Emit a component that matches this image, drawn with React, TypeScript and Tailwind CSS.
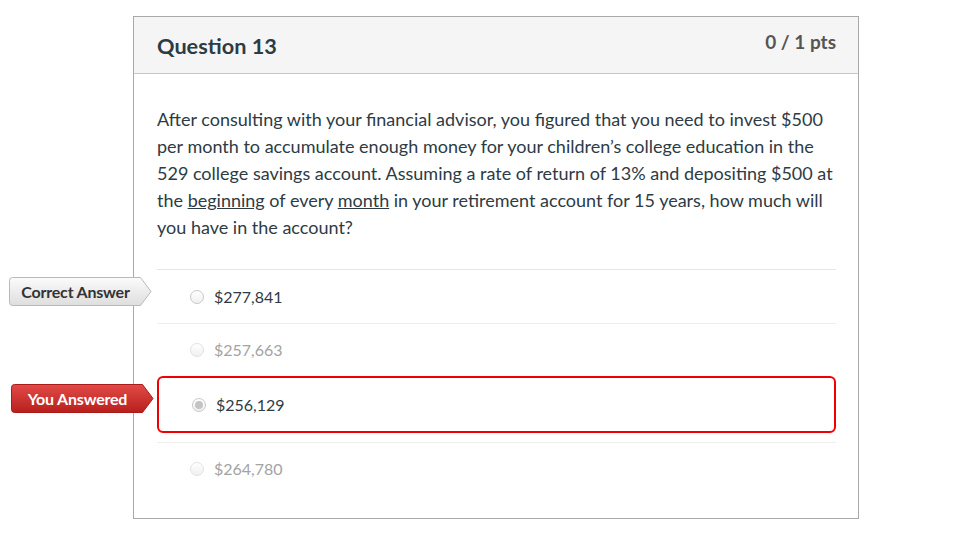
import React from "react"

function Radio({ checked, dim }: { checked?: boolean; dim?: boolean }) {
  return (
    <span
      className={`inline-flex items-center justify-center w-[14px] h-[14px] rounded-full border bg-gradient-to-b from-white to-[#f0f0f0] ${dim ? "border-[#e2e2e2]" : "border-[#c8c8c8]"}`}
    >
      {checked && <span className="w-[8px] h-[8px] rounded-full bg-[#c4c4c4]" />}
    </span>
  )
}

function Tag({ text, red }: { text: string; red?: boolean }) {
  return (
    <div className="relative w-[143px] h-[29px] flex items-center">
      <svg className="absolute inset-0" width="143" height="29" viewBox="0 0 143 29">
        <defs>
          <linearGradient id={red ? "gr" : "gg"} x1="0" y1="0" x2="0" y2="1">
            <stop offset="0" stopColor={red ? "#e14a46" : "#fbfbfb"} />
            <stop offset="1" stopColor={red ? "#b8201d" : "#dedede"} />
          </linearGradient>
        </defs>
        <path
          d="M3.5 0.5 H131.5 L142 14.5 L131.5 28.5 H3.5 Q0.5 28.5 0.5 25.5 V3.5 Q0.5 0.5 3.5 0.5 Z"
          fill={`url(#${red ? "gr" : "gg"})`}
          stroke={red ? "#a91b18" : "#b9b9b9"}
        />
      </svg>
      <span
        className={`relative w-[133px] text-center text-[16px] font-bold tracking-[-0.2px] ${red ? "text-white" : "text-[#333]"}`}
      >
        {text}
      </span>
    </div>
  )
}

export default function App() {
  return (
    <div className="w-[957px] h-[544px] bg-white pt-[16px] font-['Lato',sans-serif] text-[#2d3b45]">
      <div className="ml-[133px] w-[726px] h-[503px] border border-[#a9a9a9]">
        <div className="h-[57px] bg-[#f5f5f5] border-b border-[#c8c8c8] flex items-center justify-between pl-[23px] pr-[22px]">
          <h2 className="text-[21.7px] font-bold mt-[2px]">Question 13</h2>
          <span className="text-[19px] font-bold text-[#555] mb-[6px]">0 / 1 pts</span>
        </div>

        <div className="px-[23px] pt-[32px]">
          <p className="text-[18px] leading-[27px] w-[679px]">
            After consulting with your financial advisor, you figured that you need to invest $500
            per month to accumulate enough money for your children’s college education in the 529
            college savings account. Assuming a rate of return of 13% and depositing $500 at the{" "}
            <u>beginning</u> of every <u>month</u> in your retirement account for 15 years, how much
            will you have in the account?
          </p>

          <div className="mt-[28px] w-[679px] text-[16px]">
            <div className="relative h-[54px] border-t border-[#e6e6e6] flex items-center gap-[10px] pl-[33px]">
              <div className="absolute left-[-148px] top-[7px]">
                <Tag text="Correct Answer" />
              </div>
              <Radio />
              <span>$277,841</span>
            </div>

            <div className="h-[53px] border-t border-[#eeeeee] flex items-center gap-[10px] pl-[33px] text-[#a3a3a3]">
              <Radio dim />
              <span>$257,663</span>
            </div>

            <div className="relative h-[57px] border-2 border-[#f10000] rounded-[6px] flex items-center gap-[10px] pl-[33px]">
              <div className="absolute left-[-148px] top-[6px]">
                <Tag text="You Answered" red />
              </div>
              <Radio checked />
              <span>$256,129</span>
            </div>

            <div className="mt-[9px] h-[53px] border-t border-[#eeeeee] flex items-center gap-[10px] pl-[33px] text-[#a3a3a3]">
              <Radio dim />
              <span>$264,780</span>
            </div>
          </div>
        </div>
      </div>
    </div>
  )
}
